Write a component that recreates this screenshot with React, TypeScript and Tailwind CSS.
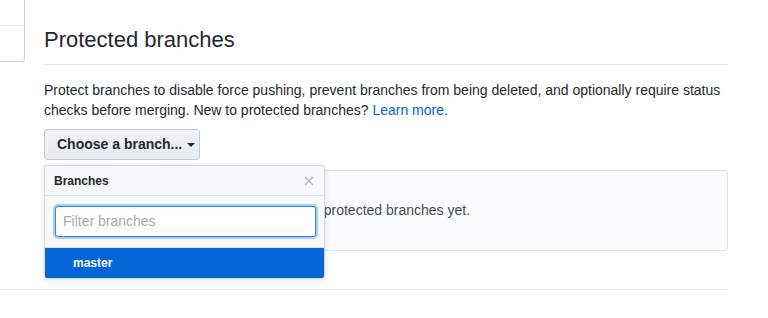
import React from "react";

export default function App() {
  return (
    <div
      className="w-[728px] bg-white text-[#24292e] border-b border-[#e1e4e8] flex"
      style={{ fontFamily: '"Liberation Sans", Arial, sans-serif' }}
    >
      {/* sidebar (clipped) */}
      <div className="w-[25px] shrink-0">
        <div className="border-r border-b border-[#d1d5da] rounded-br-[3px]">
          <div className="h-[26px] border-b border-[#e1e4e8]" />
          <div className="h-[35px]" />
        </div>
      </div>

      {/* main */}
      <div className="ml-[19px] w-[684px] pt-[25px] pb-[38px]">
        <h2 className="text-[22px] leading-[30px] font-normal pb-[9px] border-b border-[#e1e4e8]">
          Protected branches
        </h2>
        <p className="mt-[15px] text-[14px] leading-[20px]">
          Protect branches to disable force pushing, prevent branches from being deleted, and optionally require status
          checks before merging. New to protected branches? <a className="text-[#0366d6]">Learn more.</a>
        </p>

        <div className="relative mt-[9px]">
          <button className="h-[31px] w-[156px] flex items-center pl-[12px] border border-[#c7c9cc] rounded-[3px] bg-gradient-to-b from-[#f0f3f6] to-[#e6ebf1] text-[14px] font-semibold text-[#24292e]">
            <span>Choose a branch...</span>
            <span className="ml-[5px] mt-[1px] w-0 h-0 border-t-[4px] border-t-[#24292e] border-x-[4px] border-x-transparent" />
          </button>

          <div className="mt-[10px] h-[81px] border border-[#e1e4e8] rounded-[3px] bg-[#fafbfc] flex items-center justify-center text-[14px] text-[#444d56]">
            No protected branches yet.
          </div>

          {/* dropdown */}
          <div className="absolute left-0 top-[36px] w-[281px] border border-[#d8dadd] rounded-[3px] bg-[#f6f8fa] shadow-[0_1px_5px_rgba(27,31,35,0.15)] overflow-hidden z-10">
            <div className="h-[30px] border-b border-[#e1e4e8] flex items-center justify-between pl-[9px] pr-[10px]">
              <span className="text-[12px] font-bold text-[#24292e]">Branches</span>
              <svg width="10" height="10" viewBox="0 0 10 10">
                <path d="M1 1L9 9M9 1L1 9" stroke="#b5bbc1" strokeWidth="1.4" />
              </svg>
            </div>
            <div className="pl-[10px] pr-[8px] py-[10px] border-b border-[#e1e4e8]">
              <div className="h-[31px] bg-white border border-[#2188ff] rounded-[3px] shadow-[0_0_0_2px_rgba(3,102,214,0.3)] flex items-center pl-[7px] text-[14px] text-[#a3aab1]">
                Filter branches
              </div>
            </div>
            <div className="h-[30px] bg-[#0366d6] flex items-center pl-[28px] text-[12px] font-bold text-white">
              master
            </div>
          </div>
        </div>
      </div>
    </div>
  );
}
